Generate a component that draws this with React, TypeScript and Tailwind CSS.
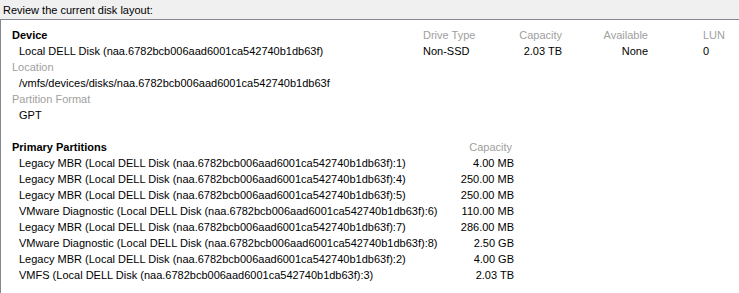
const DISK = "naa.6782bcb006aad6001ca542740b1db63f";

type Partition = { name: string; capacity: string };

const partitions: Partition[] = [
  { name: `Legacy MBR (Local DELL Disk (${DISK}):1)`, capacity: "4.00 MB" },
  { name: `Legacy MBR (Local DELL Disk (${DISK}):4)`, capacity: "250.00 MB" },
  { name: `Legacy MBR (Local DELL Disk (${DISK}):5)`, capacity: "250.00 MB" },
  { name: `VMware Diagnostic (Local DELL Disk (${DISK}):6)`, capacity: "110.00 MB" },
  { name: `Legacy MBR (Local DELL Disk (${DISK}):7)`, capacity: "286.00 MB" },
  { name: `VMware Diagnostic (Local DELL Disk (${DISK}):8)`, capacity: "2.50 GB" },
  { name: `Legacy MBR (Local DELL Disk (${DISK}):2)`, capacity: "4.00 GB" },
  { name: `VMFS (Local DELL Disk (${DISK}):3)`, capacity: "2.03 TB" },
];

export default function App() {
  return (
    <div className="h-[293px] w-[739px] overflow-hidden bg-white font-['Liberation_Sans',Arial,sans-serif] text-[11px] leading-[16px] text-black">
      <div className="flex h-[19px] items-center bg-[#f0f0f0] pl-[3px]">
        Review the current disk layout:
      </div>
      <div className="h-full border-l border-t border-[#828790] bg-white pl-[11px] pt-[7px]">
        <div className="grid grid-cols-[411px_77px_62px_86px_1fr]">
          <div className="font-bold">Device</div>
          <div className="text-[#a0a0a0]">Drive Type</div>
          <div className="text-right text-[#a0a0a0]">Capacity</div>
          <div className="text-right text-[#a0a0a0]">Available</div>
          <div className="pl-[55px] text-[#a0a0a0]">LUN</div>

          <div className="pl-[7px]">Local DELL Disk ({DISK})</div>
          <div>Non-SSD</div>
          <div className="text-right">2.03 TB</div>
          <div className="text-right">None</div>
          <div className="pl-[55px]">0</div>
        </div>

        <div className="text-[#a0a0a0]">Location</div>
        <div className="pl-[7px]">/vmfs/devices/disks/{DISK}</div>
        <div className="text-[#a0a0a0]">Partition Format</div>
        <div className="pl-[7px]">GPT</div>

        <div className="mt-[16px] grid w-[502px] grid-cols-[1fr_auto]">
          <div className="font-bold">Primary Partitions</div>
          <div className="pr-[2px] text-right text-[#a0a0a0]">Capacity</div>
          {partitions.map((p) => (
            <div key={p.name} className="contents">
              <div className="pl-[7px] whitespace-nowrap">{p.name}</div>
              <div className="text-right">{p.capacity}</div>
            </div>
          ))}
        </div>
      </div>
    </div>
  );
}
